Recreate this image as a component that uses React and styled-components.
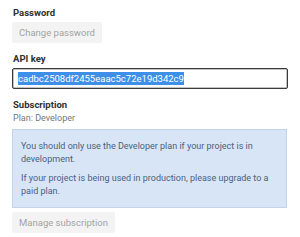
import React from "react";
import styled, { createGlobalStyle } from "styled-components";

const Global = createGlobalStyle`
  html, body { margin: 0; padding: 0; background: #fff; }
  body { font-family: Roboto, "Liberation Sans", sans-serif; }
`;

const Page = styled.div`
  width: 300px;
  padding: 7px 12px 0 12px;
  box-sizing: border-box;
  display: flex;
  flex-direction: column;
`;

const Section = styled.section`
  display: flex;
  flex-direction: column;
  align-items: flex-start;
  margin-bottom: ${(p) => p.$mb || 0}px;
`;

const Label = styled.div`
  font-size: 9.5px;
  font-weight: 700;
  color: #2f2f2f;
  line-height: 12px;
  padding-left: 1px;
  margin-bottom: ${(p) => p.$mb ?? 3}px;
`;

const Sub = styled.div`
  font-size: 9px;
  color: #777;
  line-height: 12px;
  padding-left: 1px;
  margin-bottom: 5px;
`;

const GhostButton = styled.button`
  font-family: inherit;
  font-size: 9.5px;
  color: #a3a3a3;
  background: #f3f3f3;
  border: none;
  border-radius: 2px;
  height: 21px;
  padding: 0 7px;
  cursor: default;
`;

const KeyField = styled.div`
  width: 276px;
  height: 21px;
  box-sizing: border-box;
  border: 1px solid #3a3a3a;
  border-radius: 2px;
  display: flex;
  align-items: center;
  padding-left: 5px;
  font-size: 9.5px;
  box-shadow: inset 0 0 0 0.5px #888;
`;

const Selected = styled.span`
  background: #3d8fe8;
  color: #fff;
  line-height: 13px;
`;

const Notice = styled.div`
  width: 275px;
  box-sizing: border-box;
  background: #d7e5f6;
  border: 1px solid #c3d4ea;
  padding: 10px 8px 9px 8px;
  color: #4d5f7e;
  font-size: 9px;
  line-height: 13px;
  display: flex;
  flex-direction: column;
  gap: 6px;
  margin-bottom: 4px;
`;

const P = styled.p`
  margin: 0;
`;

export default function App() {
  return (
    <>
      <Global />
      <Page>
        <Section $mb={10}>
          <Label>Password</Label>
          <GhostButton>Change password</GhostButton>
        </Section>
        <Section $mb={10}>
          <Label>API key</Label>
          <KeyField>
            <Selected>cadbc2508df2455eaac5c72e19d342c9</Selected>
          </KeyField>
        </Section>
        <Section>
          <Label $mb={1}>Subscription</Label>
          <Sub>Plan: Developer</Sub>
          <Notice>
            <P>You should only use the Developer plan if your project is in development.</P>
            <P>If your project is being used in production, please upgrade to a paid plan.</P>
          </Notice>
          <GhostButton>Manage subscription</GhostButton>
        </Section>
      </Page>
    </>
  );
}
